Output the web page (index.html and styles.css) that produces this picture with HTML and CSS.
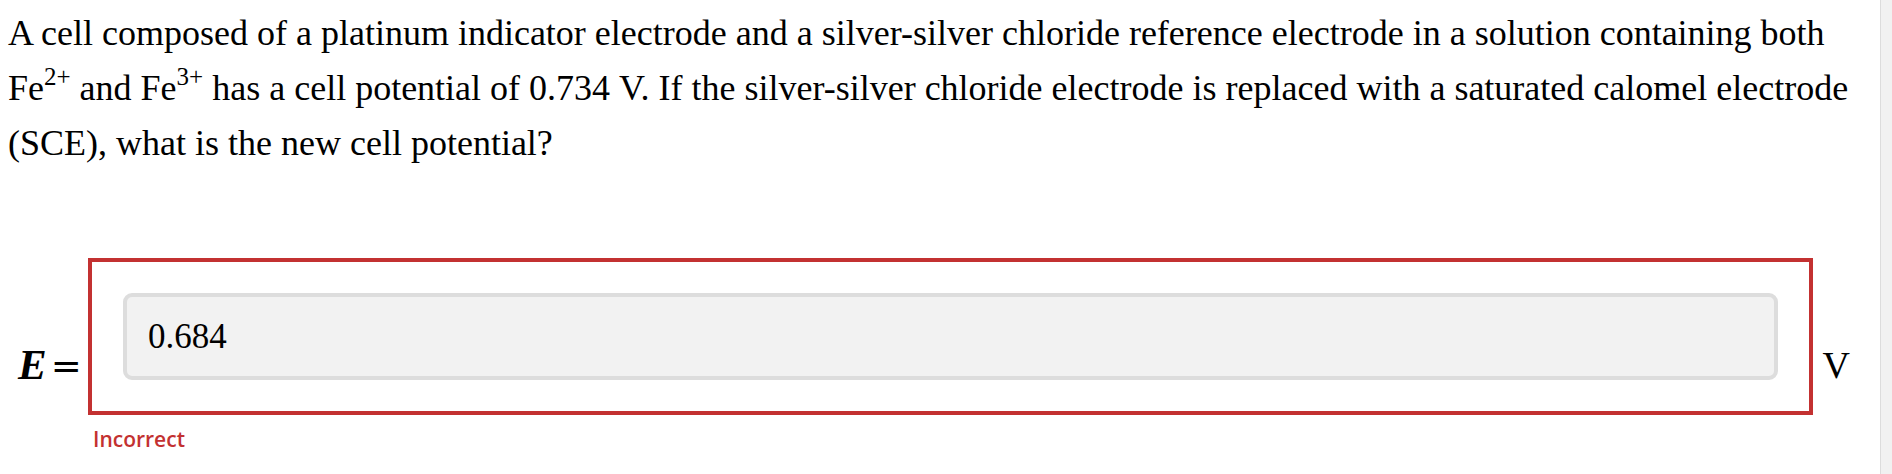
FILE: index.html
```html
<!DOCTYPE html>
<html lang="en">
<head>
<meta charset="utf-8">
<title>Cell potential question</title>
<link rel="stylesheet" href="styles.css">
</head>
<body>
<div class="page">
  <main class="content">
    <p class="question">A cell composed of a platinum indicator electrode and a silver-silver chloride reference electrode in a solution containing both Fe<sup>2+</sup> and Fe<sup>3+</sup> has a cell potential of 0.734&nbsp;V. If the silver-silver chloride electrode is replaced with a saturated calomel electrode (SCE), what is the new cell potential?</p>
    <div class="answer-row">
      <div class="label"><span class="var">E</span><span class="eq">=</span></div>
      <div class="field">
        <div class="box">
          <div class="input">0.684</div>
        </div>
        <div class="feedback">Incorrect</div>
      </div>
      <div class="unit">V</div>
    </div>
  </main>
  <div class="scrollbar"></div>
</div>
</body>
</html>
```
FILE: styles.css
```css
html, body {
  margin: 0;
  padding: 0;
  background: #ffffff;
}

.page {
  display: flex;
  height: 474px;
  overflow: hidden;
}

.content {
  flex: 1;
  padding: 6px 8px 0 8px;
  font-family: "Liberation Serif", "Times New Roman", serif;
  color: #000;
}

.question {
  margin: 0;
  font-size: 36px;
  line-height: 55px;
}

.question sup {
  font-size: 25px;
  line-height: 0;
  vertical-align: 15px;
}

.answer-row {
  display: flex;
  align-items: center;
  margin-top: 87px;
  padding-left: 10px;
  padding-right: 22px;
}

.label {
  display: flex;
  align-items: baseline;
  width: 70px;
  font-size: 43px;
  line-height: 1;
  margin-top: 18px;
}

.var {
  font-style: italic;
  font-weight: bold;
  margin-right: 4px;
}

.eq {
  font-family: "DejaVu Serif", serif;
  font-size: 37px;
}

.field {
  flex: 1;
  display: flex;
  flex-direction: column;
}

.box {
  border: 4px solid #c33131;
  padding: 31px;
}

.input {
  height: 79px;
  border: 4px solid #dddddd;
  border-radius: 9px;
  background: #f2f2f2;
  display: flex;
  align-items: center;
  padding-left: 21px;
  font-size: 35px;
}

.feedback {
  margin-top: 10px;
  margin-left: 5px;
  font-family: "Open Sans", "Noto Sans", sans-serif;
  font-weight: 600;
  font-size: 21px;
  line-height: 28px;
  color: #c33131;
}

.unit {
  margin-left: 10px;
  font-size: 38px;
  line-height: 1;
  margin-top: 18px;
}

.scrollbar {
  width: 11px;
  flex: none;
  background: #f1f1f1;
  border-left: 1px solid #dcdcdc;
}
```
